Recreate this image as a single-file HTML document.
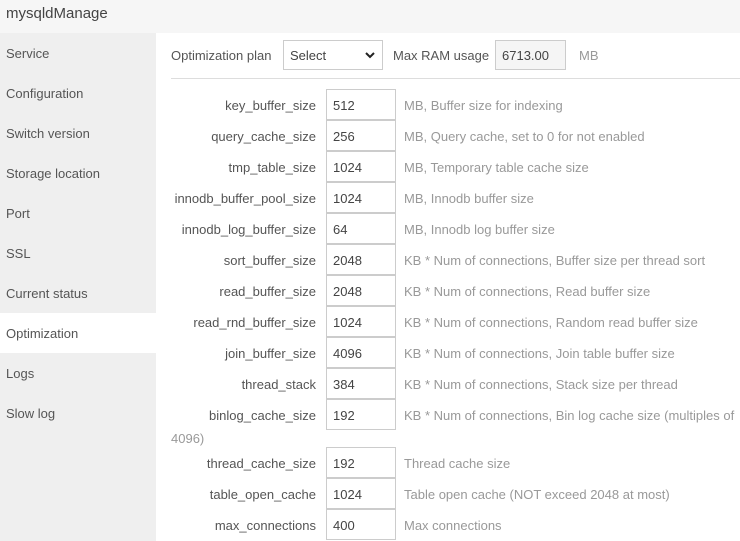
<!DOCTYPE html>
<html><head><meta charset="utf-8"><style>
*{margin:0;padding:0;box-sizing:border-box}
body{width:740px;height:541px;overflow:hidden;background:#fff;font-family:"Liberation Sans",sans-serif;font-size:13px;color:#555;position:relative}
.hdr{position:absolute;left:0;top:0;width:740px;height:33px;background:#f6f6f6;font-size:15px;color:#444;padding:5px 0 0 6px}
.side{position:absolute;left:0;top:33px;width:156px;height:508px;background:#efefef}
.side div{height:40px;line-height:42px;padding-left:6px;color:#555}
.side .on{background:#fff}
.a{position:absolute;white-space:nowrap}
.box{position:absolute;border:1px solid #ccc;background:#fff;padding-left:6px;color:#444;height:31px;line-height:31px}
.lbl{position:absolute;right:424px;white-space:nowrap;color:#555;margin-top:1px}
.d{position:absolute;left:404px;white-space:nowrap;color:#999;margin-top:1px}
</style></head><body>
<div class="hdr">mysqldManage</div>
<div class="side">
<div>Service</div><div>Configuration</div><div>Switch version</div><div>Storage location</div><div>Port</div><div>SSL</div><div>Current status</div><div class="on">Optimization</div><div>Logs</div><div>Slow log</div>
</div>
<div class="a" style="left:171px;top:48px">Optimization plan</div>
<div class="box" style="left:283px;top:40px;width:100px;height:30px;line-height:29px">Select<svg style="position:absolute;right:7px;top:11px" width="10" height="7" viewBox="0 0 10 7"><path d="M1 1l4 4 4-4" stroke="#222" stroke-width="2" fill="none"/></svg></div>
<div class="a" style="left:393px;top:48px">Max RAM usage</div>
<div class="box" style="left:495px;top:40px;width:71px;height:30px;line-height:29px;background:#f5f5f5">6713.00</div>
<div class="a" style="left:579px;top:48px;color:#999">MB</div>
<div style="position:absolute;left:171px;top:78px;width:569px;height:1px;background:#ddd"></div>

<div class="lbl" style="top:97px">key_buffer_size</div><div class="box" style="left:326px;top:89px;width:70px">512</div><div class="d" style="top:97px">MB, Buffer size for indexing</div>
<div class="lbl" style="top:128px">query_cache_size</div><div class="box" style="left:326px;top:120px;width:70px">256</div><div class="d" style="top:128px">MB, Query cache, set to 0 for not enabled</div>
<div class="lbl" style="top:159px">tmp_table_size</div><div class="box" style="left:326px;top:151px;width:70px">1024</div><div class="d" style="top:159px">MB, Temporary table cache size</div>
<div class="lbl" style="top:190px">innodb_buffer_pool_size</div><div class="box" style="left:326px;top:182px;width:70px">1024</div><div class="d" style="top:190px">MB, Innodb buffer size</div>
<div class="lbl" style="top:221px">innodb_log_buffer_size</div><div class="box" style="left:326px;top:213px;width:70px">64</div><div class="d" style="top:221px">MB, Innodb log buffer size</div>
<div class="lbl" style="top:252px">sort_buffer_size</div><div class="box" style="left:326px;top:244px;width:70px">2048</div><div class="d" style="top:252px">KB * Num of connections, Buffer size per thread sort</div>
<div class="lbl" style="top:283px">read_buffer_size</div><div class="box" style="left:326px;top:275px;width:70px">2048</div><div class="d" style="top:283px">KB * Num of connections, Read buffer size</div>
<div class="lbl" style="top:314px">read_rnd_buffer_size</div><div class="box" style="left:326px;top:306px;width:70px">1024</div><div class="d" style="top:314px">KB * Num of connections, Random read buffer size</div>
<div class="lbl" style="top:345px">join_buffer_size</div><div class="box" style="left:326px;top:337px;width:70px">4096</div><div class="d" style="top:345px">KB * Num of connections, Join table buffer size</div>
<div class="lbl" style="top:376px">thread_stack</div><div class="box" style="left:326px;top:368px;width:70px">384</div><div class="d" style="top:376px">KB * Num of connections, Stack size per thread</div>
<div class="lbl" style="top:407px">binlog_cache_size</div><div class="box" style="left:326px;top:399px;width:70px">192</div><div class="d" style="top:407px">KB * Num of connections, Bin log cache size (multiples of</div>
<div class="a" style="left:171px;top:431px;color:#999">4096)</div>
<div class="lbl" style="top:455px">thread_cache_size</div><div class="box" style="left:326px;top:447px;width:70px">192</div><div class="d" style="top:455px">Thread cache size</div>
<div class="lbl" style="top:486px">table_open_cache</div><div class="box" style="left:326px;top:478px;width:70px">1024</div><div class="d" style="top:486px">Table open cache (NOT exceed 2048 at most)</div>
<div class="lbl" style="top:517px">max_connections</div><div class="box" style="left:326px;top:509px;width:70px">400</div><div class="d" style="top:517px">Max connections</div>
</body></html>
